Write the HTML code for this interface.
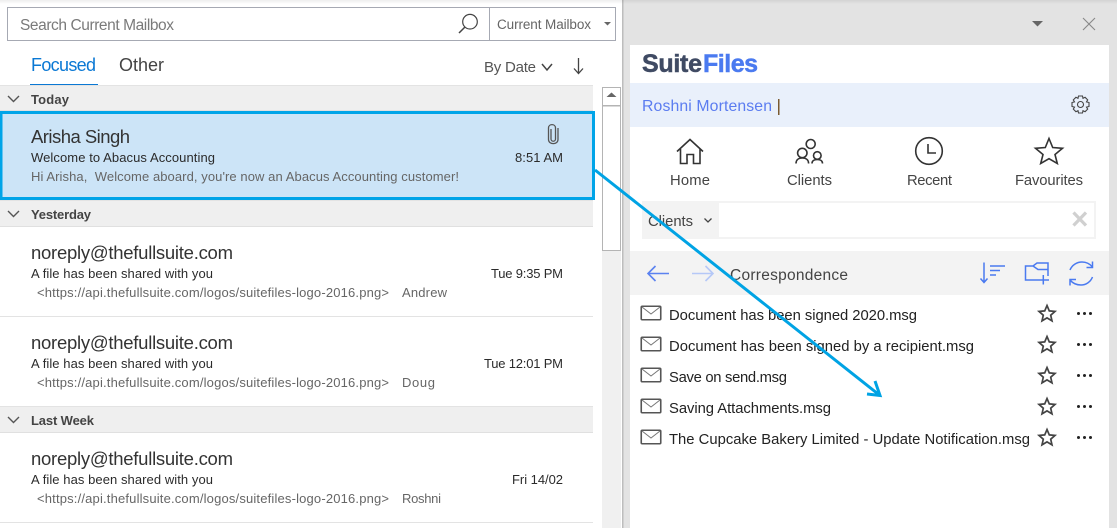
<!DOCTYPE html>
<html><head><meta charset="utf-8"><title>Outlook SuiteFiles</title>
<style>
html,body{margin:0;padding:0;background:#fff;width:1117px;height:528px;overflow:hidden}
svg{display:block}
text{font-family:"Liberation Sans",sans-serif}
.n{font-size:18.5px;fill:#333}
.s{font-size:13px;fill:#2b2b2b}
.p{font-size:13px;fill:#666}
.h{font-size:13px;font-weight:bold;fill:#444}
.f{font-size:14.8px;fill:#222}
.t{font-size:14.8px;fill:#444}
.i{fill:none;stroke:#333;stroke-width:1.6}
.b{fill:none;stroke:#4a7af0;stroke-width:1.5}
</style></head><body>
<svg width="1117" height="528" viewBox="0 0 1117 528" xmlns="http://www.w3.org/2000/svg">
<defs>
<linearGradient id="top" x1="0" y1="0" x2="0" y2="1"><stop offset="0" stop-color="#000" stop-opacity=".07"/><stop offset="1" stop-color="#000" stop-opacity="0"/></linearGradient>
<g id="env"><rect x=".75" y=".75" width="19.5" height="13.5" rx="1" fill="#fff" stroke="#555" stroke-width="1.6"/><path d="M1.5 1.5L10.5 8.5L19.5 1.5" fill="none" stroke="#777" stroke-width="1"/></g>
<path id="st" d="M9 1L11.3 6.4L17 6.9L12.7 10.7L14 16.4L9 13.4L4 16.4L5.3 10.7L1 6.9L6.7 6.4Z" fill="none" stroke="#444" stroke-width="1.7" stroke-linejoin="miter"/>
<g id="dots" fill="#222"><circle cx="1.5" cy="1.5" r="1.5"/><circle cx="7.5" cy="1.5" r="1.5"/><circle cx="13.5" cy="1.5" r="1.5"/></g>
<path id="chev" d="M8 96L13.5 101.5L19 96" fill="none" stroke="#555" stroke-width="1.4"/>
</defs>

<!-- backgrounds -->
<rect width="1117" height="528" fill="#fff"/>
<rect x="622" width="495" height="528" fill="#e3e3e3"/>
<rect x="622" width="1.5" height="528" fill="#bdbdbd"/>
<rect x="602" y="250" width="19" height="278" fill="#f0f0f0"/>
<rect x="630" y="45" width="479" height="483" fill="#fff"/>

<!-- search -->
<rect x="7.5" y="7.5" width="608" height="33" fill="#fff" stroke="#a6a9b3"/>
<line x1="489.5" y1="8" x2="489.5" y2="40" stroke="#a6a9b3"/>
<text x="20" y="30" font-size="15.5" fill="#7a7a7a" textLength="154">Search Current Mailbox</text>
<circle cx="470" cy="21.7" r="7.3" fill="none" stroke="#444" stroke-width="1.2"/>
<line x1="465" y1="27" x2="459" y2="33" stroke="#444" stroke-width="1.5"/>
<text x="497" y="29" font-size="13.5" fill="#666" textLength="94">Current Mailbox</text>
<path d="M604 22H611L607.5 25.5Z" fill="#666"/>

<!-- tabs -->
<text x="31" y="71" font-size="18" fill="#0a78d4" textLength="65">Focused</text>
<text x="119" y="71" font-size="18" fill="#444" textLength="45">Other</text>
<rect x="30" y="84" width="68" height="1" fill="#0a78d4"/>
<text x="484" y="72" font-size="15" fill="#555" textLength="52">By Date</text>
<path d="M542 64L547 70L552 64" fill="none" stroke="#444" stroke-width="1.5"/>
<path d="M578.5 58V73M574 68.5L578.5 73.5L583 68.5" fill="none" stroke="#444" stroke-width="1.3"/>

<!-- list groups -->
<rect y="85" width="593" height="26" fill="#efefef"/>
<rect y="85" width="593" height="1" fill="#e3e3e3"/><rect y="110" width="593" height="1" fill="#e0e0e0"/>
<use href="#chev"/>
<text x="31" y="104" class="h" textLength="38">Today</text>

<rect x="1" y="112.5" width="592.5" height="86" fill="#cce4f7" stroke="#00a4e8" stroke-width="3"/>
<text x="31" y="143" class="n" textLength="99">Arisha Singh</text>
<text x="31" y="162" class="s" textLength="184">Welcome to Abacus Accounting</text>
<text x="31" y="181" class="p" textLength="428">Hi Arisha,&#160; Welcome aboard, you're now an Abacus Accounting customer!</text>
<text x="515" y="162" class="s" textLength="48">8:51 AM</text>
<path d="M551 129V139C551 142 555.5 142 555.5 139V128C555.5 123.5 548.5 123.5 548.5 128V139.5C548.5 145 558 145 558 139.5V128" fill="none" stroke="#555" stroke-width="1.3"/>

<rect y="200" width="593" height="27" fill="#efefef"/>
<rect y="200" width="593" height="1" fill="#e3e3e3"/><rect y="226" width="593" height="1" fill="#e0e0e0"/>
<use href="#chev" y="115"/>
<text x="31" y="219" class="h" textLength="60">Yesterday</text>

<text x="31" y="259" class="n" textLength="202">noreply@thefullsuite.com</text>
<text x="31" y="278" class="s" textLength="182">A file has been shared with you</text>
<text x="37" y="297" class="p" textLength="352">&lt;https://api.thefullsuite.com/logos/suitefiles-logo-2016.png&gt;</text>
<text x="402" y="297" class="p" textLength="45">Andrew</text>
<text x="491" y="278" class="s" textLength="72">Tue 9:35 PM</text>
<rect y="316" width="593" height="1" fill="#e3e3e3"/>

<text x="31" y="349" class="n" textLength="202">noreply@thefullsuite.com</text>
<text x="31" y="368" class="s" textLength="182">A file has been shared with you</text>
<text x="37" y="387" class="p" textLength="352">&lt;https://api.thefullsuite.com/logos/suitefiles-logo-2016.png&gt;</text>
<text x="402" y="387" class="p" textLength="33">Doug</text>
<text x="484" y="368" class="s" textLength="79">Tue 12:01 PM</text>

<rect y="406" width="593" height="27" fill="#efefef"/>
<rect y="406" width="593" height="1" fill="#e3e3e3"/><rect y="432" width="593" height="1" fill="#e0e0e0"/>
<use href="#chev" y="321"/>
<text x="31" y="425" class="h" textLength="63">Last Week</text>

<text x="31" y="465" class="n" textLength="202">noreply@thefullsuite.com</text>
<text x="31" y="484" class="s" textLength="182">A file has been shared with you</text>
<text x="37" y="503" class="p" textLength="352">&lt;https://api.thefullsuite.com/logos/suitefiles-logo-2016.png&gt;</text>
<text x="402" y="503" class="p" textLength="39">Roshni</text>
<text x="512" y="484" class="s" textLength="51">Fri 14/02</text>
<rect y="522" width="593" height="1" fill="#e3e3e3"/>

<!-- scrollbar -->
<rect x="602.5" y="87.5" width="18" height="163" fill="#fff" stroke="#b4b4b4"/>
<rect x="603" y="105" width="17" height="1.5" fill="#b4b4b4"/>
<path d="M606.5 97H616.5L611.5 92.5Z" fill="#666"/>

<!-- right pane chrome -->
<path d="M1032 21H1043L1037.5 26.5Z" fill="#666"/>
<path d="M1083 18L1095 30M1095 18L1083 30" stroke="#888" stroke-width="1.1" fill="none"/>

<!-- logo -->
<text x="642" y="72" font-size="25" font-weight="bold" fill="#3f4a63" stroke="#3f4a63" stroke-width=".5" textLength="60">Suite</text>
<text x="703" y="72" font-size="25" font-weight="bold" fill="#4a7af0" stroke="#4a7af0" stroke-width=".5" textLength="55">Files</text>

<!-- user bar -->
<rect x="630" y="83" width="479" height="44" fill="#e9f0fb"/>
<text x="642" y="111" font-size="15.8" fill="#5b7cf0" textLength="130">Roshni Mortensen</text>
<rect x="778" y="99" width="1.5" height="16" fill="#7a5a30"/>
<g transform="translate(1080.5 104.5)" fill="none" stroke="#444" stroke-width="1.1">
<circle r="3"/>
<path d="M-2 -8.5H2L2.5 -6.2L4.6 -7.2L7.2 -4.6L6 -2.6L8.5 -2V2L6 2.6L7.2 4.6L4.6 7.2L2.5 6.2L2 8.5H-2L-2.5 6.2L-4.6 7.2L-7.2 4.6L-6 2.6L-8.5 2V-2L-6 -2.6L-7.2 -4.6L-4.6 -7.2L-2.5 -6.2Z"/>
</g>

<!-- main nav -->
<path class="i" d="M677 151.5L690 139.5L703 151.5M680.5 149V163.5H687V154.5H693.5V163.5H700V149"/>
<text x="670" y="185" class="t" textLength="40">Home</text>
<g class="i" fill="none">
<circle cx="810.7" cy="144" r="4.5"/><circle cx="802.3" cy="153" r="4.7"/><circle cx="817.3" cy="155.5" r="3.8"/>
<path d="M796 163.5C796 159.5 799 158 802.3 158C805.6 158 808.6 159.5 808.6 163.5"/>
<path d="M812 163.5C812 161 814 159.5 817.3 159.5C820.5 159.5 822.5 161 822.5 163.5"/>
</g>
<text x="787" y="185" class="t" textLength="45">Clients</text>
<circle class="i" cx="929" cy="151" r="13.3"/>
<path class="i" d="M928 144V153H936"/>
<text x="907" y="185" class="t" textLength="45">Recent</text>
<path d="M1049 138.5L1052.7 147.5L1062.5 148.3L1055 154.5L1057.3 163.5L1049 158.7L1040.7 163.5L1043 154.5L1035.5 148.3L1045.3 147.5Z" fill="none" stroke="#333" stroke-width="1.6"/>
<text x="1015" y="185" class="t" textLength="68">Favourites</text>

<!-- client search -->
<rect x="642" y="201" width="454" height="38" fill="#f3f3f3"/>
<rect x="719" y="203" width="375" height="34" fill="#fff"/>
<text x="648" y="226" class="t" textLength="45">Clients</text>
<path d="M704.5 218.5L708 222L711.5 218.5" fill="none" stroke="#444" stroke-width="1.3"/>
<path d="M1073.5 212.5L1086 225.5M1086 212.5L1073.5 225.5" stroke="#d0d0d0" stroke-width="3.2" fill="none"/>

<!-- folder nav -->
<rect x="630" y="251" width="479" height="44" fill="#f3f3f3"/>
<path d="M669 273.5H648M655.5 266L648 273.5L655.5 281" fill="none" stroke="#5b82f0" stroke-width="1.6"/>
<path d="M692 273.5H713M705.5 266L713 273.5L705.5 281" fill="none" stroke="#b5c8f7" stroke-width="1.6"/>
<text x="730" y="280" font-size="15.5" fill="#444" textLength="118">Correspondence</text>
<path class="b" d="M984 262.5V282M980.5 278.5L984 282.5L987.5 278.5M990 266H1005M990 270.5H1000M990 275H996"/>
<path class="b" d="M1040 280H1025.5V266H1033L1037 263H1048V276M1033 266L1038 269.5H1048M1043.3 275V284.5M1039 280H1049"/>
<path class="b" d="M1070 270C1072 265 1077 262 1082 262C1087 262 1090 264 1092.5 267M1092.5 261.5V267.5H1086.5M1092.5 277C1090.5 282 1086 285 1081 285C1076 285 1072.5 283 1070 280M1070 285.5V279.5H1076"/>

<!-- files -->
<use href="#env" x="640.5" y="305.5"/>
<text x="669" y="320" class="f" textLength="248">Document has been signed 2020.msg</text>
<use href="#st" x="1038" y="304.5"/><use href="#dots" x="1077" y="312"/>
<use href="#env" x="640.5" y="336.5"/>
<text x="669" y="351" class="f" textLength="305">Document has been signed by a recipient.msg</text>
<use href="#st" x="1038" y="335.5"/><use href="#dots" x="1077" y="343"/>
<use href="#env" x="640.5" y="367.5"/>
<text x="669" y="382" class="f" textLength="118">Save on send.msg</text>
<use href="#st" x="1038" y="366.5"/><use href="#dots" x="1077" y="374"/>
<use href="#env" x="640.5" y="398.5"/>
<text x="669" y="413" class="f" textLength="162">Saving Attachments.msg</text>
<use href="#st" x="1038" y="397.5"/><use href="#dots" x="1077" y="405"/>
<use href="#env" x="640.5" y="429.5"/>
<text x="669" y="444" class="f" textLength="361">The Cupcake Bakery Limited - Update Notification.msg</text>
<use href="#st" x="1038" y="428.5"/><use href="#dots" x="1077" y="436"/>

<!-- annotation arrow -->
<path d="M595 170L880 395.5M867 394L880 395.5L875 381" fill="none" stroke="#00a3e4" stroke-width="3"/>

<rect width="1117" height="4" fill="url(#top)"/>
</svg>
</body></html>
